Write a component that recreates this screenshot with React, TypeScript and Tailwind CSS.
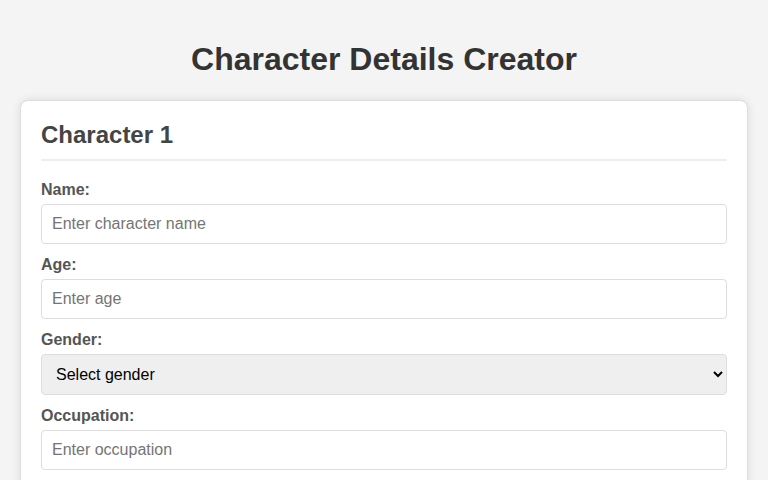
import React from "react";

const Field = ({ label, placeholder }: { label: string; placeholder: string }) => (
  <div className="mb-[12px]">
    <label className="block mb-[5px] text-[16px] leading-[18px] font-bold text-[#555]">{label}</label>
    <input
      type="text"
      placeholder={placeholder}
      className="block w-full h-[40px] px-[10px] border border-[#ddd] rounded-[4px] bg-white text-[16px] text-[#333] placeholder:text-[#757575] outline-none"
    />
  </div>
);

export default function App() {
  return (
    <div
      className="min-h-screen bg-[#f4f4f4] p-[20px] text-[#333]"
      style={{ fontFamily: '"Liberation Sans", Arial, sans-serif' }}
    >
      <h1 className="text-center text-[32px] leading-[37px] font-bold text-[#333] mt-[21px] mb-[22px]">
        Character Details Creator
      </h1>
      <div className="bg-white border border-[#ddd] rounded-[8px] shadow-[0_0_10px_rgba(0,0,0,0.1)] p-[20px]">
        <h2 className="text-[24px] leading-[28px] font-bold text-[#444] pb-[10px] border-b-2 border-[#eee] mb-[20px]">
          Character 1
        </h2>
        <Field label="Name:" placeholder="Enter character name" />
        <Field label="Age:" placeholder="Enter age" />
        <div className="mb-[12px]">
          <label className="block mb-[5px] text-[16px] leading-[18px] font-bold text-[#555]">Gender:</label>
          <select
            defaultValue=""
            className="block w-full h-[41px] px-[10px] border border-[#ddd] rounded-[4px] bg-[#efefef] text-[16px] text-black outline-none"
          >
            <option value="">Select gender</option>
            <option value="male">Male</option>
            <option value="female">Female</option>
            <option value="other">Other</option>
          </select>
        </div>
        <Field label="Occupation:" placeholder="Enter occupation" />
      </div>
    </div>
  );
}
